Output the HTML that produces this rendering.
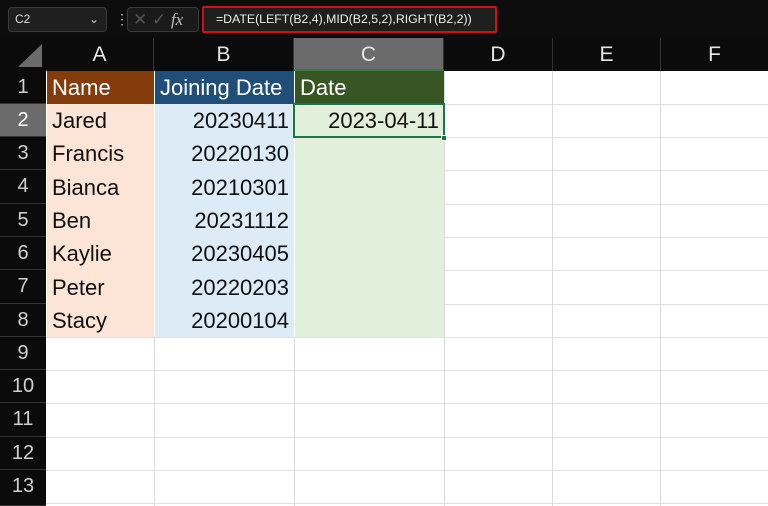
<!DOCTYPE html><html><head><style>
body{margin:0;width:768px;height:506px;overflow:hidden;background:#fff;font-family:"Liberation Sans",Arial,sans-serif;position:relative}
div{position:absolute;box-sizing:border-box}
.c{font-size:22px;color:#111;line-height:33px;padding:0 5px;white-space:nowrap}
.r{text-align:right}
.rh{left:0;width:46px;background:#0b0b0b;color:#d0d0d0;font-size:20px;text-align:center;line-height:33px;border-bottom:1px solid #333}
.ch{top:38px;height:33px;background:#0b0b0b;color:#e6e6e6;font-size:21px;text-align:center;line-height:33px;border-right:1px solid #333}
.hl{background:#e1e1e1}
.vl{background:#dcdcdc;width:1px;top:71px;height:435px}
</style></head><body>
<div style="left:0;top:0;width:768px;height:38px;background:#0d0d0d"></div>
<div style="left:8px;top:7px;width:99px;height:25px;border:1px solid #3a3a3a;border-radius:4px;background:#1f1f1f;color:#ddd;font-size:12px;line-height:23px;padding-left:6px">C2<span style="position:absolute;right:7px;top:0;color:#ccc">&#8964;</span></div>
<div style="left:115px;top:11px;color:#bbb;font-size:14px">&#8942;</div>
<div style="left:127px;top:7px;width:72px;height:25px;border:1px solid #3a3a3a;border-radius:4px;background:#1a1a1a;color:#555;font-size:17px;line-height:23px;padding-left:5px">&#10005; &#10003; <i style="color:#bbb;font-family:'Liberation Serif',serif">fx</i></div>
<div style="left:202px;top:6px;width:295px;height:27px;border:2px solid #d0101a;border-radius:2px;background:#1f1f1f;color:#eee;font-size:12.3px;line-height:23px;padding-left:12px">=DATE(LEFT(B2,4),MID(B2,5,2),RIGHT(B2,2))</div>
<div style="left:0;top:38px;width:46px;height:33px;background:#0b0b0b"></div>
<div style="left:18px;top:44px;width:0;height:0;border-left:24px solid transparent;border-bottom:23px solid #6a6a6a"></div>
<div class="ch" style="left:46px;width:108px">A</div>
<div class="ch" style="left:154px;width:140px">B</div>
<div class="ch" style="left:294px;width:150px;background:#6b6b6b;border-bottom:2px solid #3f7a3f">C</div>
<div class="ch" style="left:444px;width:109px">D</div>
<div class="ch" style="left:553px;width:108px">E</div>
<div class="ch" style="left:661px;width:107px;border-right:0">F</div>
<div style="left:47px;top:104px;width:107px;height:233px;background:#fce4d6"></div>
<div style="left:155px;top:104px;width:139px;height:233px;background:#ddebf7"></div>
<div style="left:295px;top:104px;width:149px;height:233px;background:#e2efda"></div>
<div class="hl" style="left:444px;top:104px;width:324px;height:1px"></div>
<div class="hl" style="left:444px;top:137px;width:324px;height:1px"></div>
<div class="hl" style="left:444px;top:170px;width:324px;height:1px"></div>
<div class="hl" style="left:444px;top:204px;width:324px;height:1px"></div>
<div class="hl" style="left:444px;top:237px;width:324px;height:1px"></div>
<div class="hl" style="left:444px;top:270px;width:324px;height:1px"></div>
<div class="hl" style="left:444px;top:304px;width:324px;height:1px"></div>
<div class="hl" style="left:46px;top:337px;width:722px;height:1px"></div>
<div class="hl" style="left:46px;top:370px;width:722px;height:1px"></div>
<div class="hl" style="left:46px;top:403px;width:722px;height:1px"></div>
<div class="hl" style="left:46px;top:437px;width:722px;height:1px"></div>
<div class="hl" style="left:46px;top:470px;width:722px;height:1px"></div>
<div class="hl" style="left:46px;top:503px;width:722px;height:1px"></div>
<div class="vl" style="left:154px;top:337px;height:169px"></div>
<div class="vl" style="left:294px;top:337px;height:169px"></div>
<div class="vl" style="left:444px"></div>
<div class="vl" style="left:552px"></div>
<div class="vl" style="left:660px"></div>
<div class="c" style="left:47px;top:71px;width:107px;height:33px;background:#843c0c;color:#fff">Name</div>
<div class="c" style="left:155px;top:71px;width:139px;height:33px;background:#1f4e78;color:#fff">Joining Date</div>
<div class="c" style="left:295px;top:71px;width:149px;height:33px;background:#375623;color:#fff">Date</div>
<div class="rh" style="top:71px;height:33px">1</div>
<div class="rh" style="top:104px;height:33px;background:#6b6b6b;color:#fff">2</div>
<div class="rh" style="top:137px;height:33px">3</div>
<div class="rh" style="top:170px;height:34px">4</div>
<div class="rh" style="top:204px;height:33px">5</div>
<div class="rh" style="top:237px;height:33px">6</div>
<div class="rh" style="top:270px;height:34px">7</div>
<div class="rh" style="top:304px;height:33px">8</div>
<div class="rh" style="top:337px;height:33px">9</div>
<div class="rh" style="top:370px;height:33px">10</div>
<div class="rh" style="top:403px;height:34px">11</div>
<div class="rh" style="top:437px;height:33px">12</div>
<div class="rh" style="top:470px;height:36px">13</div>
<div class="c" style="left:47px;top:104px">Jared</div>
<div class="c" style="left:47px;top:137px">Francis</div>
<div class="c" style="left:47px;top:171px">Bianca</div>
<div class="c" style="left:47px;top:204px">Ben</div>
<div class="c" style="left:47px;top:237px">Kaylie</div>
<div class="c" style="left:47px;top:271px">Peter</div>
<div class="c" style="left:47px;top:304px">Stacy</div>
<div class="c r" style="left:155px;width:139px;top:104px">20230411</div>
<div class="c r" style="left:155px;width:139px;top:137px">20220130</div>
<div class="c r" style="left:155px;width:139px;top:171px">20210301</div>
<div class="c r" style="left:155px;width:139px;top:204px">20231112</div>
<div class="c r" style="left:155px;width:139px;top:237px">20230405</div>
<div class="c r" style="left:155px;width:139px;top:271px">20220203</div>
<div class="c r" style="left:155px;width:139px;top:304px">20200104</div>
<div style="left:293px;top:103px;width:152px;height:35px;border:2px solid #217346"></div>
<div class="c r" style="left:295px;width:149px;top:104px">2023-04-11</div>
<div style="left:441px;top:135px;width:6px;height:6px;background:#217346;border:1px solid #fff"></div>
</body></html>
